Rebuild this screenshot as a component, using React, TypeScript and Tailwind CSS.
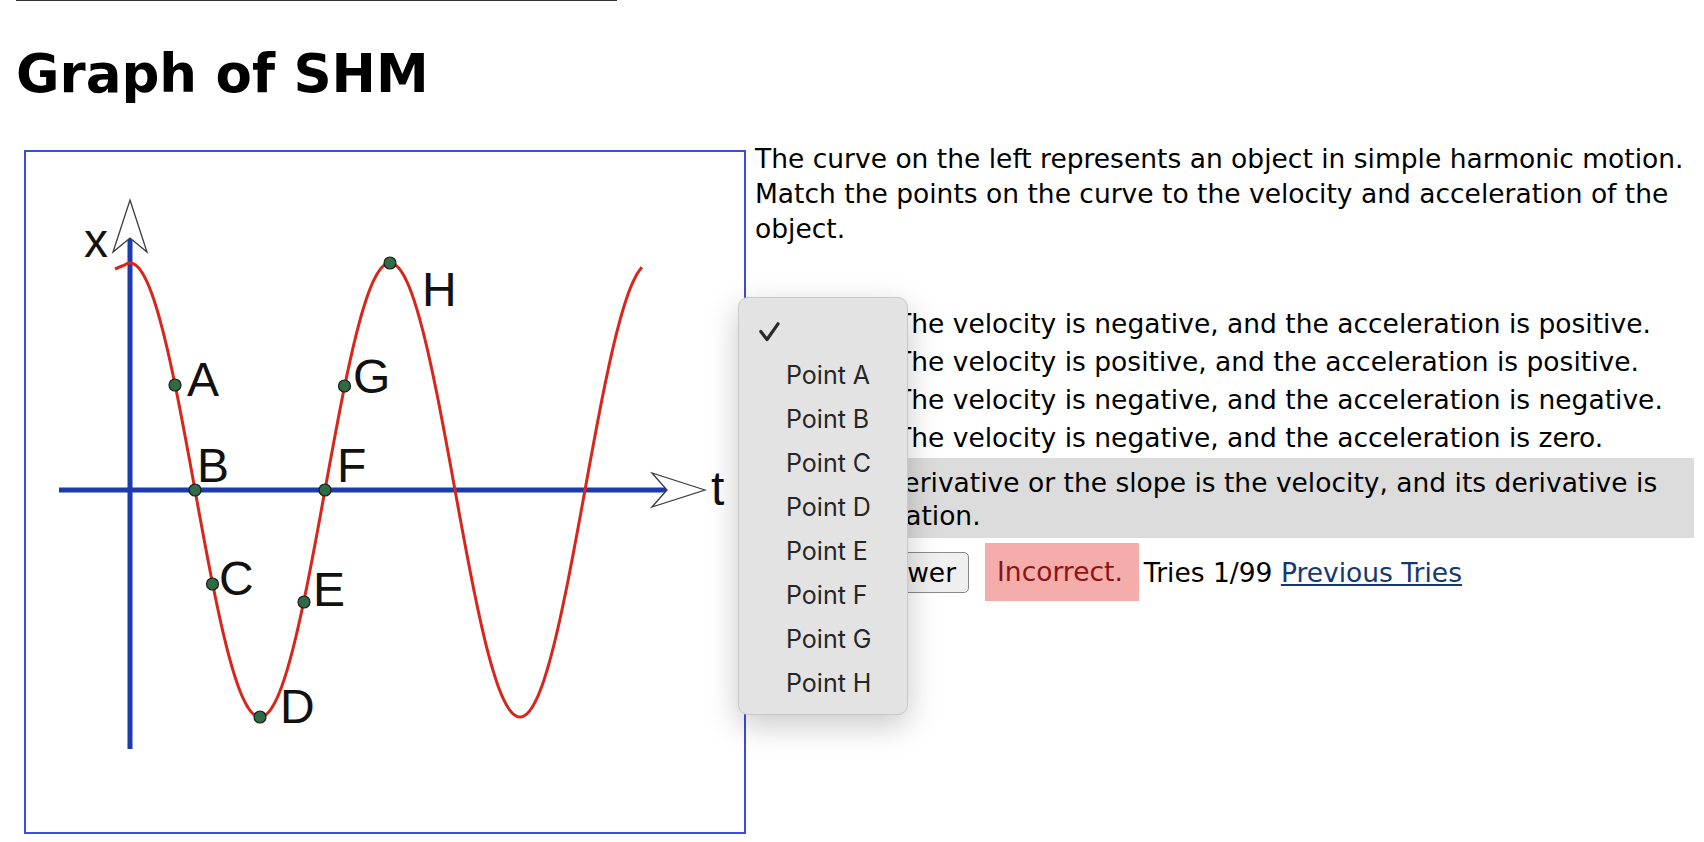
import React from "react";

// points on the curve, label glyph origin beside each one
const points = [
  { id: "A", cx: 175, cy: 385, lx: 187, ly: 396 },
  { id: "B", cx: 195, cy: 490, lx: 197, ly: 482 },
  { id: "C", cx: 212.5, cy: 584, lx: 219, ly: 595 },
  { id: "D", cx: 260, cy: 717, lx: 280, ly: 723 },
  { id: "E", cx: 304, cy: 602, lx: 313, ly: 606 },
  { id: "F", cx: 325, cy: 490, lx: 337, ly: 482 },
  { id: "G", cx: 344.5, cy: 386, lx: 353, ly: 393 },
  { id: "H", cx: 390, cy: 263, lx: 422, ly: 306 },
];

const rows = [
  "The velocity is negative, and the acceleration is positive.",
  "The velocity is positive, and the acceleration is positive.",
  "The velocity is negative, and the acceleration is negative.",
  "The velocity is negative, and the acceleration is zero.",
];

const options = ["", "Point A", "Point B", "Point C", "Point D", "Point E", "Point F", "Point G", "Point H"];

function curvePath() {
  let d = "M115 269 L122 266";
  for (let x = 124; x <= 642; x += 1) {
    const y = 490 - 227 * Math.cos((2 * Math.PI * (x - 130)) / 260);
    d += ` L${x} ${y.toFixed(1)}`;
  }
  return d;
}

function Graph() {
  // viewBox uses page coordinates so the measured positions can be used directly
  return (
    <svg width={718} height={680} viewBox="26 152 718 680" className="block">
      <line x1={130} y1={238} x2={130} y2={749} stroke="#1b3bae" strokeWidth={5} />
      <line x1={59} y1={490} x2={667} y2={490} stroke="#1b3bae" strokeWidth={5} />
      <polygon points="130,200 147,252 130,238 113,252" fill="#fff" stroke="#3a3a3a" strokeWidth={1.3} />
      <polygon points="705,490 652,473 667,490 652,507" fill="#fff" stroke="#3a3a3a" strokeWidth={1.3} />
      <path d={curvePath()} fill="none" stroke="#d7261c" strokeWidth={3} strokeLinejoin="round" />
      {points.map((p) => (
        <circle key={p.id} cx={p.cx} cy={p.cy} r={6} fill="#2f6b45" stroke="#1b1b1b" strokeWidth={1.2} />
      ))}
      <g fontFamily="'Liberation Sans', Arial, sans-serif" fontSize={48} fill="#111">
        {points.map((p) => (
          <text key={p.id} x={p.lx} y={p.ly}>
            {p.id}
          </text>
        ))}
        <text x={84} y={257}>x</text>
        <text x={711} y={505}>t</text>
      </g>
    </svg>
  );
}

function PopupMenu() {
  return (
    <div className="absolute left-[738px] top-[297px] w-[170px] rounded-[10px] border border-[#c8c8c8] bg-[#e3e3e3] pt-[11px] pb-[9px] font-['Inter','Noto_Sans',sans-serif] text-[25px] text-[#262626] shadow-[0_10px_32px_rgba(0,0,0,0.22)]">
      {options.map((o, i) => (
        <div key={i} className="relative h-[44px] pl-[47px] leading-[44px]">
          {i === 0 && (
            <svg width={22} height={22} viewBox="0 0 22 22" className="absolute left-[20px] top-[13px]">
              <path d="M1.8 9.5 L8 17.5 L19 1.8" fill="none" stroke="#2a2a2a" strokeWidth={3.2} strokeLinecap="round" strokeLinejoin="round" />
            </svg>
          )}
          {o}
        </div>
      ))}
    </div>
  );
}

export default function App() {
  return (
    <div className="relative min-h-screen overflow-hidden bg-white pl-4 pr-[10px] font-['DejaVu_Sans',Verdana,sans-serif] text-black">
      <div className="h-px w-[601px] bg-[#333]" />
      <h1 className="mt-[43px] text-[53px] font-bold leading-[60px]">Graph of SHM</h1>

      <div className="mt-[37px] flex items-start">
        <div className="ml-2 mt-[9px] h-[684px] w-[722px] shrink-0 border-2 border-[#3b4ce0] bg-white">
          <Graph />
        </div>

        <div className="ml-[9px] flex-1 text-[26.5px] leading-[35px]">
          <p>
            The curve on the left represents an object in simple harmonic motion. Match the points on the curve to the
            velocity and acceleration of the object.
          </p>

          <div className="mt-[59px]">
            {rows.map((r) => (
              <div key={r} className="flex h-[38px] items-center">
                <span className="mr-[8px] h-[30px] w-[132px] shrink-0 rounded border border-[#999] bg-[#f5f5f5]" />
                <span className="whitespace-nowrap leading-[38px]">{r}</span>
              </div>
            ))}
          </div>

          <div className="mt-px bg-[#dcdcdc] px-[2px] pt-[8px] pb-[6px] leading-[33px]">
            Hint: The derivative or the slope is the velocity, and its derivative is the acceleration.
          </div>

          <div className="mt-[5px] flex items-center whitespace-nowrap">
            <button className="rounded-[5px] border border-[#8a8a8a] bg-[#efefef] py-[4px] pl-0 pr-[12px] leading-[31px]">
              Submit Answer
            </button>
            <span className="ml-[16px] bg-[#f4adab] py-[12px] pl-[12px] pr-[16px] leading-[34px] text-[#8b1414]">
              Incorrect.
            </span>
            <span className="ml-[5px]">
              Tries 1/99{" "}
              <a href="#" className="text-[#15386f] underline">
                Previous Tries
              </a>
            </span>
          </div>
        </div>
      </div>

      <PopupMenu />
    </div>
  );
}
